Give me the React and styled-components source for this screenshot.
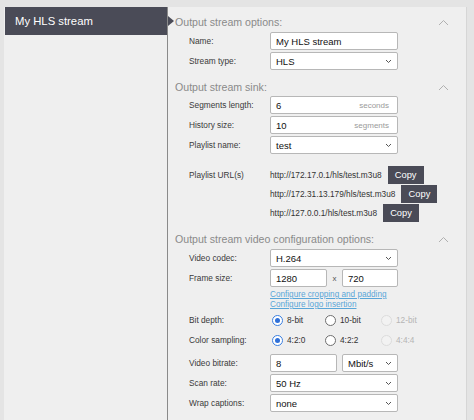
import React from "react";
import styled, { createGlobalStyle } from "styled-components";

const Global = createGlobalStyle`
  html, body { margin: 0; padding: 0; background: #e4e4e4; }
  body { font-family: "Liberation Sans", Arial, sans-serif; color: #333; }
`;

const dark = "#4a4b57";

const Page = styled.div`
  display: flex;
  height: 420px;
  padding: 7px 7px 0 4px;
  box-sizing: border-box;
`;

const Sidebar = styled.div`
  width: 163px;
  background: #efefef;
  border-right: 1px solid #8a8a8a;
`;

const SideItem = styled.div`
  position: relative;
  height: 28px;
  margin-left: 1px;
  padding-left: 10px;
  display: flex;
  align-items: center;
  background: ${p => (p.active ? dark : "transparent")};
  color: ${p => (p.active ? "#fff" : "#333")};
  font-size: 11.3px;
  &::after {
    content: "";
    display: ${p => (p.active ? "block" : "none")};
    position: absolute;
    right: -7px;
    top: 9px;
    border-top: 5px solid transparent;
    border-bottom: 5px solid transparent;
    border-left: 6px solid ${dark};
  }
`;

const Main = styled.div`
  flex: 1;
  background: #efefef;
  border-right: 1px solid #d6d6d6;
  padding: 0 17px 0 7px;
`;

const Section = styled.div`
  display: flex;
  flex-direction: column;
  gap: ${p => p.gap ?? 2}px;
`;

const Heading = styled.div`
  display: flex;
  align-items: center;
  justify-content: space-between;
  height: 16px;
  margin-top: ${p => p.top}px;
  margin-bottom: ${p => p.bottom ?? 2}px;
  font-size: 10.6px;
  color: #8a8a8a;
`;

const Row = styled.div`
  display: flex;
  align-items: ${p => (p.top ? "flex-start" : "center")};
  min-height: ${p => p.h || 18}px;
  margin-top: ${p => p.mt || 0}px;
  padding-left: 14px;
`;

const Label = styled.div`
  width: 81px;
  flex: none;
  font-size: 8.3px;
  color: #3a3a3a;
  line-height: ${p => (p.lh ? p.lh + "px" : "normal")};
`;

const Field = styled.div`
  display: flex;
  align-items: center;
  justify-content: space-between;
  box-sizing: border-box;
  width: ${p => p.w || 128}px;
  height: 18px;
  padding: 0 5px;
  background: #fff;
  border: 1px solid #b7b7b7;
  border-radius: 2px;
  font-size: 9.5px;
  color: #111;
`;

const Hint = styled.span`
  font-size: 8px;
  color: #9a9a9a;
  padding-right: 3px;
`;

const Times = styled.span`
  width: 15px;
  text-align: center;
  font-size: 8px;
  color: #555;
`;

const Gap = styled.span`
  width: 5px;
`;

const Urls = styled.div`
  display: flex;
  flex-direction: column;
  gap: 1px;
`;

const UrlLine = styled.div`
  display: flex;
  align-items: center;
  gap: 6px;
  height: 18px;
  font-size: 8.3px;
  color: #333;
`;

const CopyButton = styled.button`
  width: 36px;
  height: 18px;
  padding: 0;
  border: none;
  background: ${dark};
  color: #fff;
  font-family: inherit;
  font-size: 9.3px;
`;

const Links = styled.div`
  display: flex;
  flex-direction: column;
  padding-left: 95px;
  margin-top: 3px;
`;

const Link = styled.a`
  font-size: 8.2px;
  line-height: 10px;
  color: #5aa6d8;
  text-decoration: underline;
`;

const Options = styled.div`
  display: grid;
  grid-template-columns: 53px 56px auto;
  margin-left: 2px;
`;

const Option = styled.label`
  display: flex;
  align-items: center;
  gap: 4px;
  font-size: 8.3px;
  color: ${p => (p.disabled ? "#b5b5b5" : "#333")};
`;

const Dot = styled.span`
  box-sizing: border-box;
  width: 11px;
  height: 11px;
  border-radius: 50%;
  border: 1px solid ${p => (p.checked ? "#3b7fe0" : p.disabled ? "#dcdcdc" : "#6f6f6f")};
  background: ${p => (p.disabled ? "#f2f2f2" : "#fff")};
  display: flex;
  align-items: center;
  justify-content: center;
  &::after {
    content: "";
    display: ${p => (p.checked ? "block" : "none")};
    width: 5px;
    height: 5px;
    border-radius: 50%;
    background: #2f70d8;
  }
`;

const Chevron = ({ up }) => (
  <svg width={up ? 11 : 7} height={up ? 7 : 5} viewBox={up ? "0 0 11 7" : "0 0 7 5"}>
    {up ? (
      <path d="M1 6 L5.5 1.5 L10 6" fill="none" stroke="#b0b0b0" strokeWidth="1" />
    ) : (
      <path d="M1 1 L3.5 3.5 L6 1" fill="none" stroke="#555" strokeWidth="1" />
    )}
  </svg>
);

const Select = ({ value, w }) => (
  <Field w={w}>
    <span>{value}</span>
    <Chevron />
  </Field>
);

const Radios = ({ items, checked, disabled }) => (
  <Options>
    {items.map(item => (
      <Option key={item} disabled={item === disabled}>
        <Dot checked={item === checked} disabled={item === disabled} />
        {item}
      </Option>
    ))}
  </Options>
);

const urls = [
  "http://172.17.0.1/hls/test.m3u8",
  "http://172.31.13.179/hls/test.m3u8",
  "http://127.0.0.1/hls/test.m3u8",
];

export default function App() {
  return (
    <>
      <Global />
      <Page>
        <Sidebar>
          <SideItem active>My HLS stream</SideItem>
        </Sidebar>
        <Main>
          <Heading top={7}>
            Output stream options:
            <Chevron up />
          </Heading>
          <Section>
            <Row>
              <Label>Name:</Label>
              <Field>My HLS stream</Field>
            </Row>
            <Row>
              <Label>Stream type:</Label>
              <Select value="HLS" />
            </Row>
          </Section>

          <Heading top={9} bottom={1}>
            Output stream sink:
            <Chevron up />
          </Heading>
          <Section>
            <Row>
              <Label>Segments length:</Label>
              <Field>6<Hint>seconds</Hint></Field>
            </Row>
            <Row>
              <Label>History size:</Label>
              <Field>10<Hint>segments</Hint></Field>
            </Row>
            <Row>
              <Label>Playlist name:</Label>
              <Select value="test" />
            </Row>
            <Row top mt={10}>
              <Label lh={18}>Playlist URL(s)</Label>
              <Urls>
                {urls.map(u => (
                  <UrlLine key={u}>
                    {u}
                    <CopyButton>Copy</CopyButton>
                  </UrlLine>
                ))}
              </Urls>
            </Row>
          </Section>

          <Heading top={9}>
            Output stream video configuration options:
            <Chevron up />
          </Heading>
          <Section>
            <Row>
              <Label>Video codec:</Label>
              <Select value="H.264" />
            </Row>
            <Row>
              <Label>Frame size:</Label>
              <Field w={57}>1280</Field>
              <Times>x</Times>
              <Field w={56}>720</Field>
            </Row>
          </Section>
          <Links>
            <Link>Configure cropping and padding</Link>
            <Link>Configure logo insertion</Link>
          </Links>
          <Section gap={0}>
            <Row h={20}>
              <Label>Bit depth:</Label>
              <Radios items={["8-bit", "10-bit", "12-bit"]} checked="8-bit" disabled="12-bit" />
            </Row>
            <Row h={20}>
              <Label>Color sampling:</Label>
              <Radios items={["4:2:0", "4:2:2", "4:4:4"]} checked="4:2:0" disabled="4:4:4" />
            </Row>
          </Section>
          <Section>
            <Row mt={4}>
              <Label>Video bitrate:</Label>
              <Field w={67}>8</Field>
              <Gap />
              <Select value="Mbit/s" w={56} />
            </Row>
            <Row>
              <Label>Scan rate:</Label>
              <Select value="50 Hz" />
            </Row>
            <Row>
              <Label>Wrap captions:</Label>
              <Select value="none" />
            </Row>
          </Section>
        </Main>
      </Page>
    </>
  );
}
